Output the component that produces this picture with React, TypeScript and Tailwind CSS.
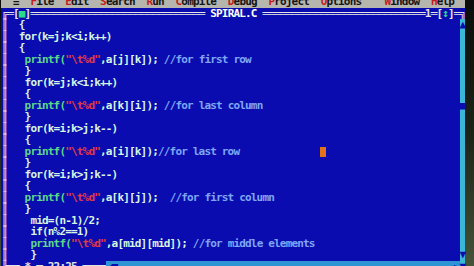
import React from "react";

type Seg = { t: string; c?: string };

const TEXT = "text-[#d6f5e6]";
const GREEN = "text-[#5cd98a]";
const RED = "text-[#e5393a]";
const BLUE = "text-[#7ea6f6]";
const LINE = "text-[#e4e4e4]";

const sp = (n: number) => " ".repeat(n);

// printf rows all share the same shape, only the args and comment change
const printfLine = (indent: number, args: string, gap: string, comment: string): Seg[] => [
  { t: sp(indent) },
  { t: "printf(", c: GREEN },
  { t: '"\\t%d"', c: RED },
  { t: "," + args },
  { t: gap },
  { t: comment, c: BLUE },
];

const code: Seg[][] = [
  [{ t: "  {" }],
  [{ t: "  for(k=j;k<i;k++)" }],
  [{ t: "  {" }],
  printfLine(3, "a[j][k]);", " ", "//for first row"),
  [{ t: "   }" }],
  [{ t: "   for(k=j;k<i;k++)" }],
  [{ t: "   {" }],
  printfLine(3, "a[k][i]);", " ", "//for last column"),
  [{ t: "   }" }],
  [{ t: "   for(k=i;k>j;k--)" }],
  [{ t: "   {" }],
  printfLine(3, "a[i][k]);", "", "//for last row"),
  [{ t: "   }" }],
  [{ t: "   for(k=i;k>j;k--)" }],
  [{ t: "   {" }],
  printfLine(3, "a[k][j]);", "  ", "//for first column"),
  [{ t: "   }" }],
  [{ t: "    mid=(n-1)/2;" }],
  [{ t: "    if(n%2==1)" }],
  printfLine(4, "a[mid][mid]);", " ", "//for middle elements"),
  [{ t: "    }" }],
];

const CURSOR_ROW = 11;
const CURSOR_PAD = 14;

const scrollMarks: Record<number, string> = { 0: "▲", 7: "■", 20: "▼" };

const menu: [string, number][] = [
  ["≡", 2],
  ["File", 5],
  ["Edit", 11],
  ["Search", 17],
  ["Run", 25],
  ["Compile", 30],
  ["Debug", 39],
  ["Project", 46],
  ["Options", 55],
  ["Window", 66],
  ["Help", 74],
];

const MenuBar = () => {
  let col = 0;
  const parts: React.ReactNode[] = [];
  menu.forEach(([label, at], i) => {
    parts.push(<span key={`s${i}`}>{sp(at - col)}</span>);
    if (label === "≡") {
      parts.push(<span key={`l${i}`}>{label}</span>);
    } else {
      parts.push(
        <span key={`l${i}`}>
          <span className="text-[#c41c1c]">{label[0]}</span>
          {label.slice(1)}
        </span>
      );
    }
    col = at + label.length;
  });
  return (
    <div className="h-[11.5px] bg-[#b6b6ae] text-[#141414] whitespace-pre">{parts}</div>
  );
};

const TitleBar = () => (
  <div className={`h-[11.5px] whitespace-pre ${LINE}`}>
    ╔═[<span className="text-[#2bd98a]">■</span>]{"═".repeat(30)} <span className="text-white">SPIRAL.C</span> {"═".repeat(28)}1═[
    <span className="text-[#2bd98a]">↕</span>]═╗
  </div>
);

const CodeRow = ({ segs, index }: { segs: Seg[]; index: number }) => (
  <div className="flex h-[11.5px]">
    <span className={`inline-block w-[5.8px] ${LINE}`}>║</span>
    <div className={`w-[452.4px] overflow-hidden whitespace-pre ${TEXT}`}>
      {segs.map((s, i) => (
        <span key={i} className={s.c}>
          {s.t}
        </span>
      ))}
      {index === CURSOR_ROW && (
        <>
          {sp(CURSOR_PAD)}
          <span className="inline-block align-top mt-[1.5px] h-[10px] w-[5.8px] bg-[#e2721c]" />
        </>
      )}
    </div>
    <div className="w-[5.8px] bg-[#3cb6d8] text-[#0a0cb0] text-center">
      {scrollMarks[index] ?? ""}
    </div>
  </div>
);

const StatusRow = () => (
  <div className="flex h-[11.5px] whitespace-pre">
    <div className={`w-[104.4px] ${LINE}`}>╚══ * ═ 22:25 ════</div>
    <div className="w-[353.8px] flex justify-between bg-[#2e94d4] text-[#0a0cb0]">
      <span>◄■</span>
      <span>►</span>
    </div>
    <div className="w-[5.8px] bg-[#3cb6d8] text-[#0a0cb0]">▼</div>
  </div>
);

export default function App() {
  return (
    <div className="w-[474px] h-[266px] overflow-hidden flex bg-linear-to-b from-[#0a0d0a] via-[#1c2418] to-[#46543a]">
      <div className="ml-[1.4px] mt-[-3.75px] w-[464px] shrink-0 bg-[#0a0cb0] font-['DejaVu_Sans_Mono','Liberation_Mono',monospace] font-bold text-[11px] leading-[11.5px] tracking-[-0.8226px]">
        <MenuBar />
        <TitleBar />
        {code.map((segs, i) => (
          <CodeRow key={i} segs={segs} index={i} />
        ))}
        <StatusRow />
      </div>
    </div>
  );
}
